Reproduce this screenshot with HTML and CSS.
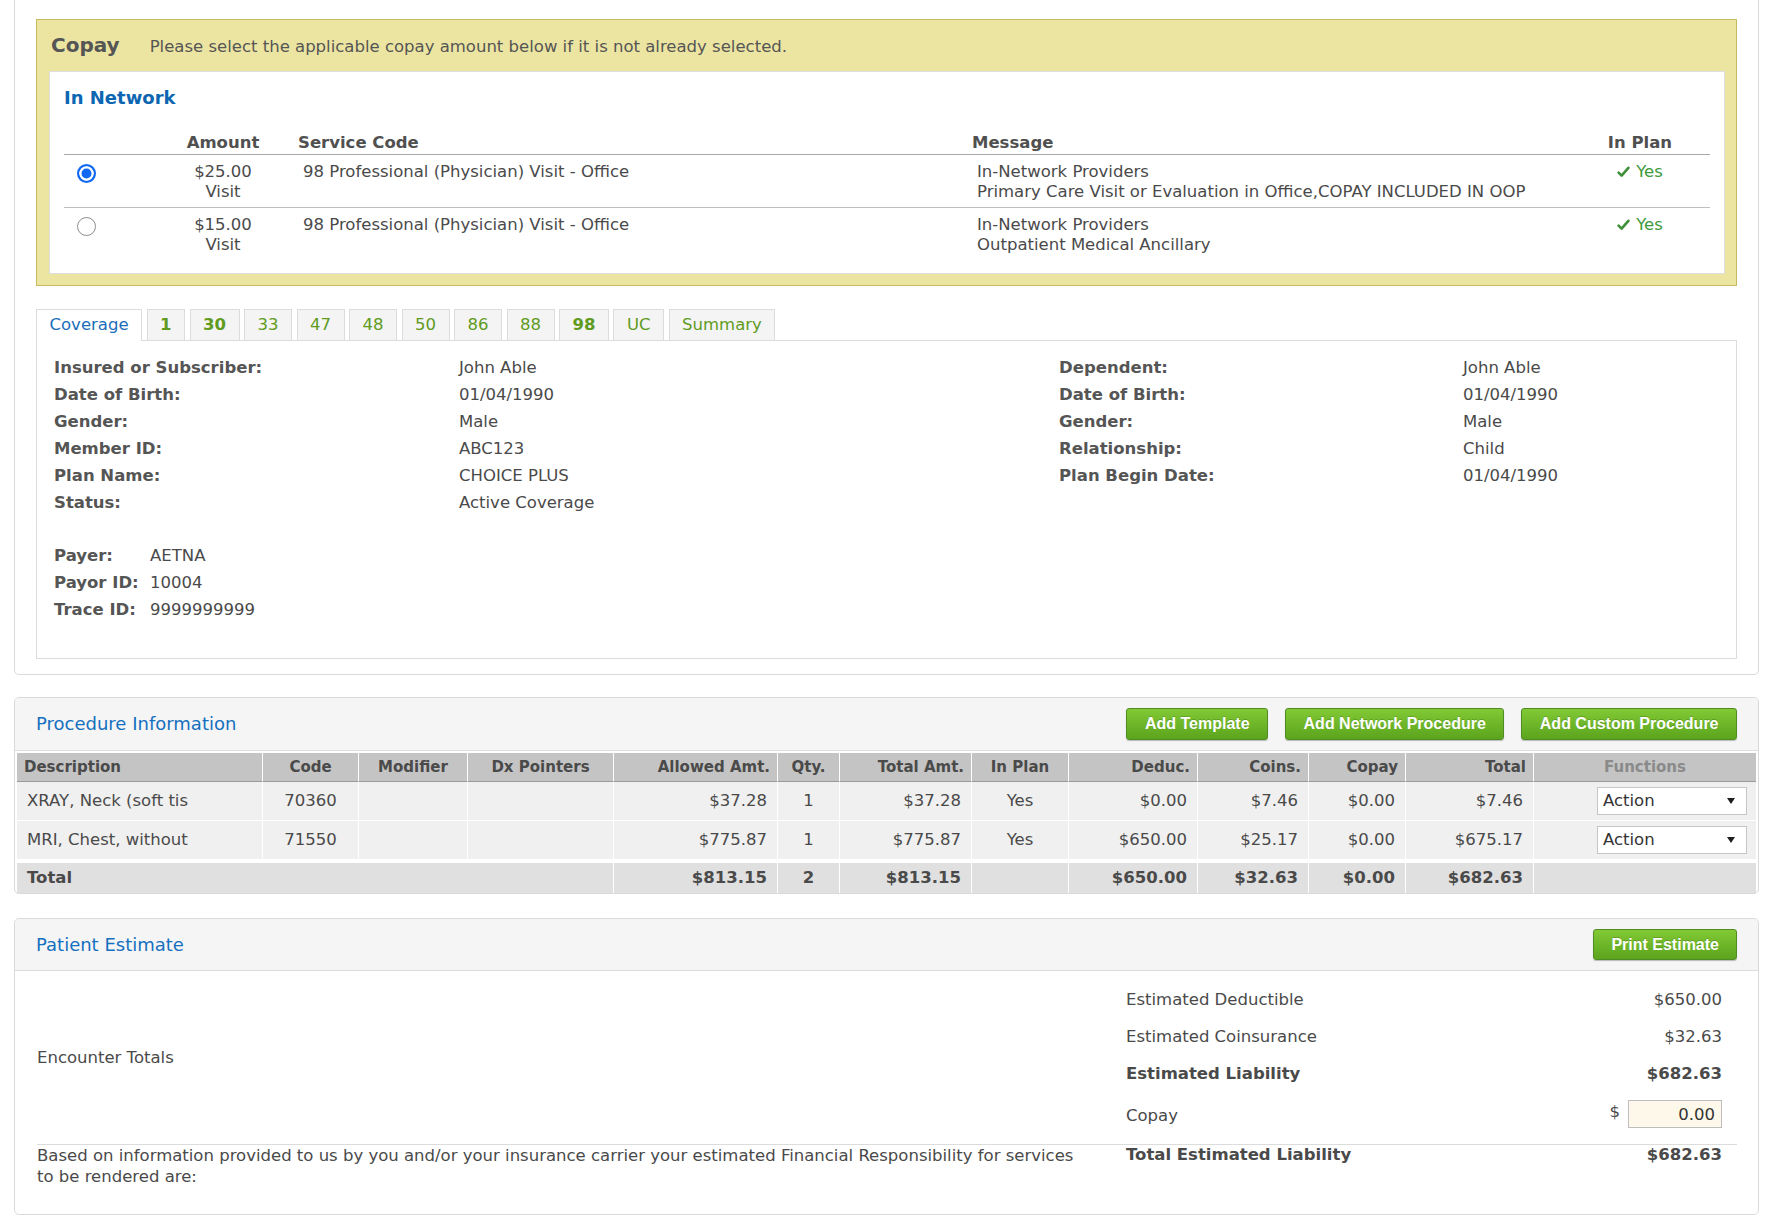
FILE: index.html
```html
<!DOCTYPE html>
<html lang="en">
<head>
<meta charset="utf-8">
<title>Eligibility &amp; Patient Estimate</title>
<link rel="stylesheet" href="styles.css">
</head>
<body>
<div class="panel top-panel">
  <div class="copay">
    <div class="copay-head">
      <span class="copay-title">Copay</span>
      <span class="copay-note">Please select the applicable copay amount below if it is not already selected.</span>
    </div>
    <div class="copay-body">
      <h3 class="net-title">In Network</h3>
      <table class="copay-table">
        <colgroup>
          <col class="cc1"><col class="cc2"><col class="cc3"><col class="cc4"><col class="cc5">
        </colgroup>
        <thead>
          <tr><th></th><th class="c">Amount</th><th>Service Code</th><th>Message</th><th class="c">In Plan</th></tr>
        </thead>
        <tbody>
          <tr>
            <td class="radio-cell"><span class="radio on"></span></td>
            <td class="c">$25.00<br>Visit</td>
            <td>98 Professional (Physician) Visit - Office</td>
            <td>In-Network Providers<br>Primary Care Visit or Evaluation in Office,COPAY INCLUDED IN OOP</td>
            <td class="c"><span class="yes"><svg width="13" height="12" viewBox="0 0 13 12"><path d="M1.6 6.6 L4.6 9.6 L11.4 1.8" fill="none" stroke="#3f8f3a" stroke-width="2.6" stroke-linecap="round" stroke-linejoin="round"/></svg>Yes</span></td>
          </tr>
          <tr>
            <td class="radio-cell"><span class="radio"></span></td>
            <td class="c">$15.00<br>Visit</td>
            <td>98 Professional (Physician) Visit - Office</td>
            <td>In-Network Providers<br>Outpatient Medical Ancillary</td>
            <td class="c"><span class="yes"><svg width="13" height="12" viewBox="0 0 13 12"><path d="M1.6 6.6 L4.6 9.6 L11.4 1.8" fill="none" stroke="#3f8f3a" stroke-width="2.6" stroke-linecap="round" stroke-linejoin="round"/></svg>Yes</span></td>
          </tr>
        </tbody>
      </table>
    </div>
  </div>

  <div class="tabs">
    <div class="tab active">Coverage</div>
    <div class="tab b">1</div>
    <div class="tab b">30</div>
    <div class="tab">33</div>
    <div class="tab">47</div>
    <div class="tab">48</div>
    <div class="tab">50</div>
    <div class="tab">86</div>
    <div class="tab">88</div>
    <div class="tab b">98</div>
    <div class="tab">UC</div>
    <div class="tab">Summary</div>
  </div>
  <div class="tab-box">
    <div class="info-grid">
      <div class="lbl">Insured or Subscriber:</div><div>John Able</div><div class="lbl">Dependent:</div><div>John Able</div>
      <div class="lbl">Date of Birth:</div><div>01/04/1990</div><div class="lbl">Date of Birth:</div><div>01/04/1990</div>
      <div class="lbl">Gender:</div><div>Male</div><div class="lbl">Gender:</div><div>Male</div>
      <div class="lbl">Member ID:</div><div>ABC123</div><div class="lbl">Relationship:</div><div>Child</div>
      <div class="lbl">Plan Name:</div><div>CHOICE PLUS</div><div class="lbl">Plan Begin Date:</div><div>01/04/1990</div>
      <div class="lbl">Status:</div><div>Active Coverage</div><div></div><div></div>
    </div>
    <div class="payer-grid">
      <div class="lbl">Payer:</div><div>AETNA</div>
      <div class="lbl">Payor ID:</div><div>10004</div>
      <div class="lbl">Trace ID:</div><div>9999999999</div>
    </div>
  </div>
</div>

<div class="panel proc-panel">
  <div class="panel-head">
    <span class="panel-title">Procedure Information</span>
    <div class="btns">
      <span class="btn">Add Template</span>
      <span class="btn">Add Network Procedure</span>
      <span class="btn">Add Custom Procedure</span>
    </div>
  </div>
  <table class="proc-table">
    <colgroup>
      <col class="p1"><col class="p2"><col class="p3"><col class="p4"><col class="p5"><col class="p6"><col class="p7">
      <col class="p8"><col class="p9"><col class="p10"><col class="p11"><col class="p12"><col class="p13">
    </colgroup>
    <thead>
      <tr>
        <th class="l">Description</th><th>Code</th><th>Modifier</th><th>Dx Pointers</th>
        <th class="r">Allowed Amt.</th><th>Qty.</th><th class="r">Total Amt.</th><th>In Plan</th>
        <th class="r">Deduc.</th><th class="r">Coins.</th><th class="r">Copay</th><th class="r">Total</th>
        <th class="fn-h">Functions</th>
      </tr>
    </thead>
    <tbody>
      <tr>
        <td class="l">XRAY, Neck (soft tis</td><td>70360</td><td></td><td></td>
        <td class="r">$37.28</td><td>1</td><td class="r">$37.28</td><td>Yes</td>
        <td class="r">$0.00</td><td class="r">$7.46</td><td class="r">$0.00</td><td class="r">$7.46</td>
        <td class="fn"><span class="select">Action<span class="caret"></span></span></td>
      </tr>
      <tr>
        <td class="l">MRI, Chest, without</td><td>71550</td><td></td><td></td>
        <td class="r">$775.87</td><td>1</td><td class="r">$775.87</td><td>Yes</td>
        <td class="r">$650.00</td><td class="r">$25.17</td><td class="r">$0.00</td><td class="r">$675.17</td>
        <td class="fn"><span class="select">Action<span class="caret"></span></span></td>
      </tr>
      <tr class="total">
        <td class="l" colspan="4">Total</td>
        <td class="r">$813.15</td><td>2</td><td class="r">$813.15</td><td></td>
        <td class="r">$650.00</td><td class="r">$32.63</td><td class="r">$0.00</td><td class="r">$682.63</td>
        <td></td>
      </tr>
    </tbody>
  </table>
</div>

<div class="panel est-panel">
  <div class="panel-head">
    <span class="panel-title">Patient Estimate</span>
    <span class="btn">Print Estimate</span>
  </div>
  <div class="est-body">
    <table class="est-table">
      <colgroup><col class="e1"><col class="e2"><col class="e3"></colgroup>
      <tr>
        <td class="enc" rowspan="4">Encounter Totals</td>
        <td class="lab">Estimated Deductible</td>
        <td class="val">$650.00</td>
      </tr>
      <tr>
        <td class="lab">Estimated Coinsurance</td>
        <td class="val">$32.63</td>
      </tr>
      <tr>
        <td class="lab strong">Estimated Liability</td>
        <td class="val strong">$682.63</td>
      </tr>
      <tr class="copay-row">
        <td class="lab">Copay</td>
        <td class="val"><span class="dollar">$</span><input class="copay-input" type="text" value="0.00"></td>
      </tr>
      <tr class="final">
        <td class="note">Based on information provided to us by you and/or your insurance carrier your estimated Financial Responsibility for services to be rendered are:</td>
        <td class="lab strong">Total Estimated Liability</td>
        <td class="val strong">$682.63</td>
      </tr>
    </table>
  </div>
</div>
</body>
</html>
```

FILE: styles.css
```css
html, body {
  margin: 0;
  padding: 0;
  background: #ffffff;
}

body {
  font-family: "DejaVu Sans", Verdana, sans-serif;
  font-size: 16.5px;
  line-height: 20px;
  color: #4a4a4a;
}

.panel {
  margin-left: 14px;
  width: 1745px;
  box-sizing: border-box;
  border: 1px solid #dadada;
  border-radius: 5px;
  background: #fff;
}

.top-panel {
  border-top: none;
  border-radius: 0 0 5px 5px;
  padding: 19px 21px 15px;
}

/* Copay block */
.copay {
  background: #ece5a2;
  border: 1px solid #c6bc5f;
}

.copay-head {
  display: flex;
  align-items: baseline;
  padding: 13px 14px 14px;
}

.copay-title {
  font-size: 20px;
  line-height: 24px;
  font-weight: bold;
  color: #555;
  margin-right: 30px;
}

.copay-note {
  color: #555;
}

.copay-body {
  background: #fff;
  border: 1px solid #dedede;
  margin: 0 11px 11px 12px;
  padding: 16px 14px 13px;
}

.net-title {
  margin: 0 0 25px;
  font-size: 18px;
  line-height: 20px;
  font-weight: bold;
  color: #0d66b2;
}

.copay-table {
  width: 100%;
  border-collapse: collapse;
  table-layout: fixed;
}

.cc1 { width: 94px; }
.cc2 { width: 130px; }
.cc3 { width: 674px; }
.cc4 { width: 608px; }
.cc5 { width: 140px; }

.copay-table th {
  text-align: left;
  font-weight: bold;
  color: #505050;
  padding: 0 10px 1px;
  border-bottom: 1px solid #a9a9a9;
}

.copay-table td {
  vertical-align: top;
  padding: 7px 15px 5px;
}

.copay-table tbody tr:first-child td {
  border-bottom: 1px solid #bfbfbf;
}

.copay-table th.c,
.copay-table td.c {
  text-align: center;
}

.copay-table td.radio-cell {
  padding-left: 13px;
}

.radio {
  display: block;
  width: 19px;
  height: 19px;
  box-sizing: border-box;
  border-radius: 50%;
  border: 1px solid #8c8c8c;
  background: #fff;
  margin-top: 2px;
}

.radio.on {
  border: 2px solid #1068f2;
  background: #1068f2;
  box-shadow: inset 0 0 0 2.5px #fff;
}

.yes {
  display: inline-flex;
  align-items: center;
  gap: 6px;
  color: #3d9a3d;
}

/* Tabs */
.tabs {
  display: flex;
  align-items: flex-start;
  gap: 4.5px;
  margin-top: 23px;
  margin-bottom: -1px;
  position: relative;
}

.tab {
  height: 31px;
  box-sizing: border-box;
  border: 1px solid #dcdcdc;
  border-bottom: none;
  background: #f4f4f4;
  padding: 0 12.5px;
  line-height: 30px;
  color: #5f9b1e;
}

.tab.b {
  font-weight: bold;
}

.tab.active {
  height: 32px;
  background: #fff;
  color: #1b6eb9;
  position: relative;
  z-index: 1;
}

.tab-box {
  border: 1px solid #dcdcdc;
  padding: 17px 17px 38px;
}

.info-grid {
  display: grid;
  grid-template-columns: 405px 600px 404px 1fr;
  row-gap: 7px;
}

.lbl {
  font-weight: bold;
  color: #555;
}

.payer-grid {
  display: grid;
  grid-template-columns: 96px 1fr;
  row-gap: 7px;
  margin-top: 33px;
}

/* Panels with header */
.proc-panel {
  margin-top: 22px;
}

.est-panel {
  margin-top: 24px;
}

.panel-head {
  display: flex;
  align-items: center;
  justify-content: space-between;
  height: 52px;
  padding: 0 21px;
  background: #f5f5f5;
  border-bottom: 1px solid #dcdcdc;
  border-radius: 5px 5px 0 0;
}

.est-panel .panel-head {
  height: 51px;
}

.panel-title {
  font-size: 18px;
  color: #1570bf;
}

.btns {
  display: flex;
  gap: 17px;
}

.btn {
  display: inline-block;
  height: 32px;
  box-sizing: border-box;
  padding: 0 17.5px;
  border: 1px solid #4f8c22;
  border-radius: 3px;
  background: linear-gradient(#82c935, #5ba41d);
  box-shadow: 0 1px 1px rgba(0, 0, 0, 0.25);
  color: #fff;
  font-family: "Liberation Sans", Arial, sans-serif;
  font-weight: bold;
  font-size: 16px;
  line-height: 30px;
  text-shadow: 0 -1px 0 rgba(0, 0, 0, 0.18);
  white-space: nowrap;
}

.est-panel .btn {
  height: 31px;
  line-height: 29px;
  padding: 0 17px;
}

/* Procedure table */
.proc-table {
  margin: 2px 2px 0;
  width: 1739px;
  border-collapse: separate;
  border-spacing: 0;
  table-layout: fixed;
}

.p1 { width: 246px; }
.p2 { width: 96px; }
.p3 { width: 109px; }
.p4 { width: 146px; }
.p5 { width: 164px; }
.p6 { width: 62px; }
.p7 { width: 132px; }
.p8 { width: 97px; }
.p9 { width: 129px; }
.p10 { width: 111px; }
.p11 { width: 97px; }
.p12 { width: 128px; }
.p13 { width: 222px; }

.proc-table th {
  background: #c4c4c4;
  border-bottom: 1px solid #9a9a9a;
  border-right: 1px solid #fff;
  padding: 4px 7px;
  font-size: 15px;
  line-height: 20px;
  font-weight: bold;
  color: #4a4a4a;
  text-align: center;
  white-space: nowrap;
}

.proc-table td {
  background: #f0f0f0;
  border-right: 1px solid #fff;
  border-bottom: 1px solid #fff;
  padding: 9px 10px;
  text-align: center;
  white-space: nowrap;
  overflow: hidden;
}

.proc-table th:last-child,
.proc-table td:last-child {
  border-right: none;
}

.proc-table .l { text-align: left; }
.proc-table .r { text-align: right; }

.proc-table th.fn-h {
  color: #8a8a8a;
}

.proc-table td.fn {
  padding: 0 9px;
  text-align: right;
  vertical-align: middle;
}

.proc-table tr.total td {
  background: #e0e0e0;
  font-weight: bold;
  border-top: 3px solid #fff;
  border-bottom: none;
  padding: 5px 10px;
}

.select {
  display: inline-flex;
  align-items: center;
  justify-content: space-between;
  width: 150px;
  height: 28px;
  box-sizing: border-box;
  border: 1px solid #c6c6c6;
  background: #fff;
  padding: 0 11px 0 5px;
  vertical-align: middle;
  color: #333;
  text-align: left;
}

.caret {
  width: 0;
  height: 0;
  border-left: 4.5px solid transparent;
  border-right: 4.5px solid transparent;
  border-top: 6px solid #1e1e1e;
}

/* Patient estimate */
.est-body {
  padding: 11px 22px 27px;
}

.est-table {
  width: 100%;
  border-collapse: collapse;
  table-layout: fixed;
}

.e1 { width: 1074px; }
.e2 { width: 390px; }
.e3 { width: 236px; }

.est-table td {
  padding: 8px 0 9px;
  vertical-align: top;
}

.est-table td.enc {
  vertical-align: middle;
  padding: 0 0 10px;
}

.est-table td.lab {
  padding-left: 15px;
}

.est-table td.val {
  text-align: right;
  padding-right: 15px;
}

.strong {
  font-weight: bold;
}

.copay-row td.lab {
  padding-top: 13px;
  padding-bottom: 18px;
}

.copay-row td.val {
  padding-top: 7px;
  padding-bottom: 16px;
}

.dollar {
  display: inline-block;
  vertical-align: top;
  line-height: 24px;
  margin-right: 8px;
}

.copay-input {
  width: 94px;
  height: 28px;
  box-sizing: border-box;
  margin: 0;
  border: 1px solid #bdbdbd;
  background: #fdf8ea;
  text-align: right;
  padding: 0 6px 0 0;
  font: inherit;
  color: #333;
  vertical-align: top;
}

.final td {
  border-top: 1px solid #dcdcdc;
  padding-top: 0;
  padding-bottom: 0;
}

.est-table td.note {
  line-height: 21px;
  padding-right: 30px;
}
```
